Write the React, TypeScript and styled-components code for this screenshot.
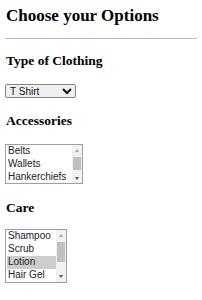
import React from "react";
import styled, { createGlobalStyle } from "styled-components";

const GlobalStyle = createGlobalStyle`
  html, body {
    margin: 0;
    padding: 0;
    background: #fff;
  }
  body {
    font-family: "Liberation Serif", "Times New Roman", serif;
    color: #000;
  }
`;

const Page = styled.div`
  padding: 6px 5px 0 5px;
`;

const Title = styled.h1`
  font-size: 17px;
  font-weight: bold;
  margin: 0 0 0 1px;
  line-height: 20px;
`;

const Rule = styled.hr`
  border: none;
  border-top: 1px solid #b8b8b8;
  margin: 12px 0 0 0;
  height: 0;
`;

const Section = styled.section`
  display: flex;
  flex-direction: column;
  align-items: flex-start;
`;

const SectionTitle = styled.h3<{ $gap?: number }>`
  font-size: 13.5px;
  font-weight: bold;
  margin: ${(p) => p.$gap ?? 14}px 0 0 1px;
  line-height: 16px;
`;

const Dropdown = styled.select<{ $width: number }>`
  font-family: "Liberation Sans", Arial, sans-serif;
  font-size: 10px;
  width: ${(p) => p.$width}px;
  height: 14px;
  margin-top: 15px;
  border: 1px solid #858585;
  border-radius: 2px;
  color: #111;
`;

const ListFrame = styled.div<{ $width: number; $gap: number }>`
  display: flex;
  width: ${(p) => p.$width}px;
  margin-top: ${(p) => p.$gap}px;
  border: 1px solid #a0a0a0;
  background: #fff;
`;

const ListBox = styled.select<{ $rows: number }>`
  flex: 1;
  min-width: 0;
  height: ${(p) => p.$rows * 12.8}px;
  font-family: "Liberation Sans", Arial, sans-serif;
  font-size: 10px;
  margin: 0;
  padding: 0 0 0 1px;
  border: none;
  outline: none;
  color: #222;
  overflow: hidden;

  option {
    padding: 0 1px;
    line-height: 12.8px;
    min-height: 12.8px;
  }

  option:checked {
    background: #cdcdcd;
    color: #222;
  }
`;

const ScrollBar = styled.div`
  width: 10px;
  display: flex;
  flex-direction: column;
  background: #f1f1f1;
`;

const ScrollButton = styled.div`
  height: 10px;
  display: flex;
  align-items: center;
  justify-content: center;
`;

const Arrow = styled.span<{ $down?: boolean }>`
  width: 0;
  height: 0;
  border-left: 2.5px solid transparent;
  border-right: 2.5px solid transparent;
  ${(p) =>
    p.$down
      ? "border-top: 3px solid #555;"
      : "border-bottom: 3px solid #a8a8a8;"}
`;

const Track = styled.div`
  flex: 1;
  padding: 2px 1px 0 1px;
`;

const Thumb = styled.div<{ $size: number }>`
  height: ${(p) => p.$size}px;
  background: #c1c1c1;
`;

const ScrollList = ({
  width,
  gap,
  rows,
  thumb,
  options,
  selected,
}: {
  width: number;
  gap: number;
  rows: number;
  thumb: number;
  options: string[];
  selected?: string[];
}) => (
  <ListFrame $width={width} $gap={gap}>
    <ListBox $rows={rows} multiple size={rows} defaultValue={selected}>
      {options.map((o) => (
        <option key={o}>{o}</option>
      ))}
    </ListBox>
    <ScrollBar>
      <ScrollButton>
        <Arrow />
      </ScrollButton>
      <Track>
        <Thumb $size={thumb} />
      </Track>
      <ScrollButton>
        <Arrow $down />
      </ScrollButton>
    </ScrollBar>
  </ListFrame>
);

export default function App() {
  return (
    <>
      <GlobalStyle />
      <Page>
        <Title>Choose your Options</Title>
        <Rule />
        <Section>
          <SectionTitle>Type of Clothing</SectionTitle>
          <Dropdown $width={71} defaultValue="tshirt">
            <option value="tshirt">T Shirt</option>
            <option value="jeans">Jeans</option>
            <option value="jacket">Jacket</option>
          </Dropdown>
        </Section>
        <Section>
          <SectionTitle $gap={15}>Accessories</SectionTitle>
          <ScrollList
            width={76}
            gap={15}
            rows={3}
            thumb={13}
            options={["Belts", "Wallets", "Hankerchiefs", "Ties"]}
          />
        </Section>
        <Section>
          <SectionTitle $gap={16}>Care</SectionTitle>
          <ScrollList
            width={60}
            gap={13}
            rows={4}
            thumb={20}
            options={["Shampoo", "Scrub", "Lotion", "Hair Gel", "Soap"]}
            selected={["Lotion"]}
          />
        </Section>
      </Page>
    </>
  );
}
